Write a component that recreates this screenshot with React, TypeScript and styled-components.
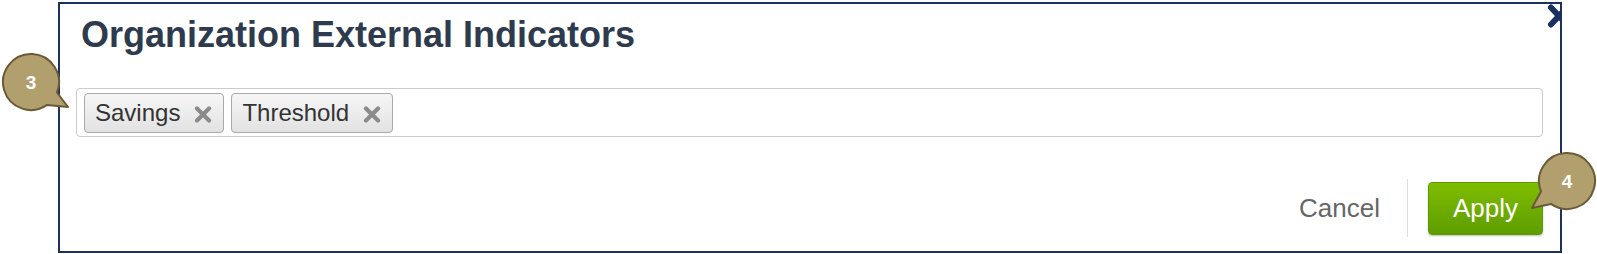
import * as React from 'react';
import styled, { createGlobalStyle } from 'styled-components';

const navy = '#1c3160';
const sans = '"Liberation Sans", Arial, Helvetica, sans-serif';

const GlobalStyle = createGlobalStyle`
  html, body {
    margin: 0;
    padding: 0;
    background: #fff;
    font-family: ${sans};
  }
`;

const Page = styled.div`
  position: relative;
  width: 1597px;
  height: 254px;
  box-sizing: border-box;
  padding: 2px 0 0 58px;
  overflow: hidden;
`;

const Dialog = styled.div`
  position: relative;
  box-sizing: border-box;
  width: 1504px;
  height: 251px;
  border: 2px solid ${navy};
  padding: 11px 17px 14px 16px;
  display: flex;
  flex-direction: column;
  overflow: hidden;
  background: #fff;
`;

const Title = styled.h1`
  margin: 0 0 0 5px;
  font-size: 36px;
  line-height: 40px;
  font-weight: bold;
  color: #2e3a4e;
`;

const CloseButton = styled.svg`
  position: absolute;
  top: -1px;
  right: -12px;
  width: 26px;
  height: 26px;
`;

const TagInput = styled.div`
  margin-top: 33px;
  height: 49px;
  box-sizing: border-box;
  border: 1px solid #cbcbcb;
  border-radius: 4px;
  padding: 4px 6px 3px 7px;
  display: flex;
  align-items: flex-start;
  gap: 7px;
`;

const Tag = styled.div`
  height: 40px;
  box-sizing: border-box;
  border: 1px solid #a9a9a9;
  border-radius: 4px;
  background: linear-gradient(#f6f6f6, #e2e2e2);
  padding: 0 10px 0 10px;
  display: flex;
  align-items: center;
  gap: 13px;
  font-size: 24px;
  color: #333;
`;

const TagRemove = styled.svg`
  width: 20px;
  height: 17px;
  margin-top: 3px;
`;

const Footer = styled.div`
  margin-top: 42px;
  display: flex;
  justify-content: flex-end;
  align-items: center;
  height: 58px;
`;

const CancelLink = styled.span`
  font-size: 26px;
  color: #666;
  margin-right: 27px;
`;

const Divider = styled.div`
  width: 1px;
  align-self: stretch;
  background: #dedede;
  margin-right: 20px;
`;

const ApplyButton = styled.button`
  width: 115px;
  height: 53px;
  border: 1px solid #5c9a06;
  border-radius: 4px;
  background: linear-gradient(#7fbd02, #5e9d00);
  color: #fff;
  font-family: ${sans};
  font-size: 26px;
  box-shadow: 0 1px 2px rgba(0, 0, 0, 0.25);
  padding: 0;
`;

const BadgeSvg = styled.svg<{ $left: number; $top: number }>`
  position: absolute;
  left: ${(p) => p.$left}px;
  top: ${(p) => p.$top}px;
  width: 80px;
  height: 70px;
  overflow: visible;
`;

type BadgeProps = {
  label: string;
  left: number;
  top: number;
  cx: number;
  cy: number;
  tip: [number, number];
  angles: [number, number];
};

// numbered speech-bubble callout, tail given by two angles on the circle and a tip point
const Badge: React.FC<BadgeProps> = ({ label, left, top, cx, cy, tip, angles }) => {
  const r = 28;
  const pt = (deg: number) => {
    const a = (deg * Math.PI) / 180;
    return `${(cx + r * Math.cos(a)).toFixed(2)} ${(cy + r * Math.sin(a)).toFixed(2)}`;
  };
  const d = `M ${pt(angles[0])} L ${tip[0]} ${tip[1]} L ${pt(angles[1])} A ${r} ${r} 0 1 1 ${pt(angles[0])} Z`;
  return (
    <BadgeSvg $left={left} $top={top} viewBox="0 0 80 70">
      <path d={d} fill="#b1a06d" stroke="#6b5a37" strokeWidth={2} strokeLinejoin="round" />
      <text
        x={cx}
        y={cy}
        fill="#fff"
        fontFamily={sans}
        fontWeight="bold"
        fontSize={19}
        textAnchor="middle"
        dominantBaseline="central"
      >
        {label}
      </text>
    </BadgeSvg>
  );
};

const RemoveIcon = () => (
  <TagRemove viewBox="0 0 20 17">
    <path d="M4 2.5 L16 14.5 M16 2.5 L4 14.5" stroke="#8b8b8b" strokeWidth={4.2} strokeLinecap="round" />
  </TagRemove>
);

const tags = ['Savings', 'Threshold'];

export default function App() {
  return (
    <>
      <GlobalStyle />
      <Page>
        <Dialog>
          <Title>Organization External Indicators</Title>
          <CloseButton viewBox="0 0 26 26">
            <path d="M5 4.5 L21 21.5 M21 4.5 L5 21.5" stroke={navy} strokeWidth={6} strokeLinecap="round" />
          </CloseButton>
          <TagInput>
            {tags.map((t) => (
              <Tag key={t}>
                {t}
                <RemoveIcon />
              </Tag>
            ))}
          </TagInput>
          <Footer>
            <CancelLink>Cancel</CancelLink>
            <Divider />
            <ApplyButton>Apply</ApplyButton>
          </Footer>
        </Dialog>
        <Badge label="3" left={0} top={50} cx={31} cy={32} tip={[68, 57]} angles={[22, 55]} />
        <Badge label="4" left={1517} top={149} cx={50} cy={32} tip={[15, 59]} angles={[125, 158]} />
      </Page>
    </>
  );
}
